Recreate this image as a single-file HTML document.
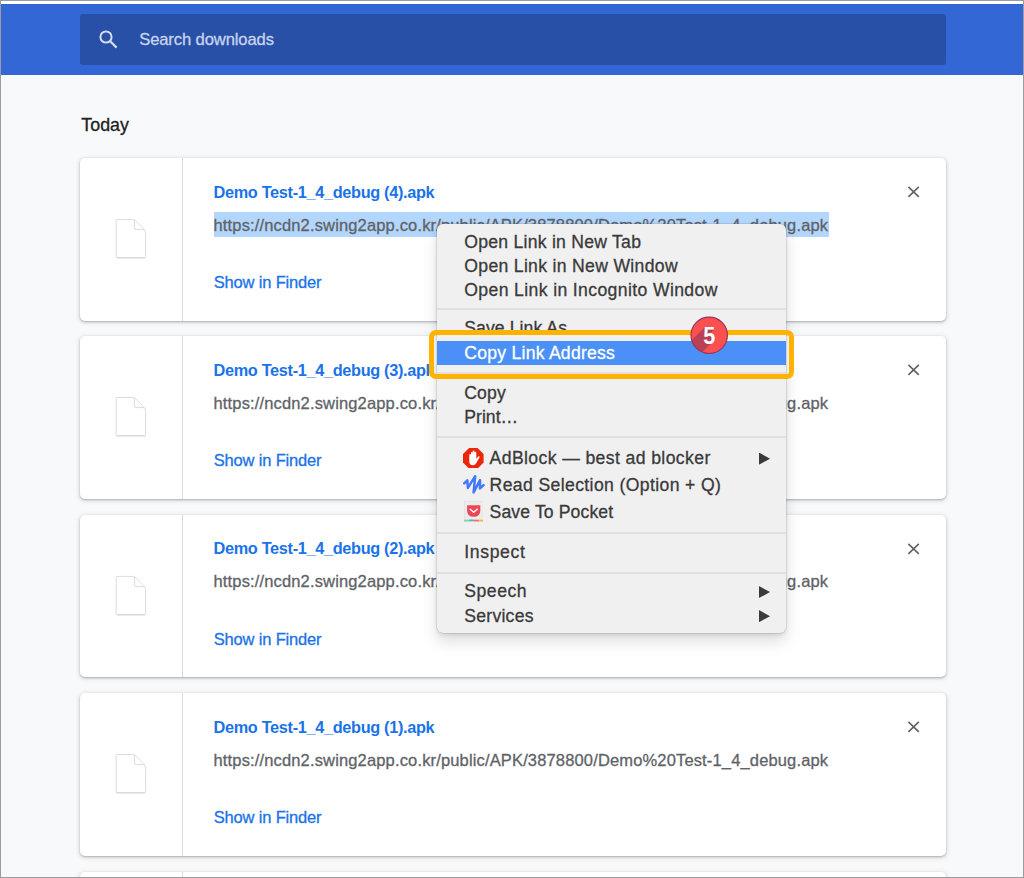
<!DOCTYPE html>
<html lang="en">
<head>
<meta charset="utf-8">
<title>Downloads</title>
<style>
html,body{margin:0;padding:0;}
body{width:1024px;height:878px;position:relative;overflow:hidden;background:#fff;font-family:"Liberation Sans",sans-serif;}
#frame{position:absolute;left:0;top:0;width:1022px;height:876px;border:1px solid rgba(90,90,90,.6);z-index:50;pointer-events:none;}
#page{position:absolute;left:1px;top:4px;width:1022px;height:873px;background:#f8f9fa;overflow:hidden;}
#toolbar{position:absolute;left:0;top:0;width:1022px;height:71px;background:#3367d6;}
#search{position:absolute;left:79px;top:10px;width:866px;height:51px;background:#2850a7;border-radius:3px;}
.t{position:absolute;white-space:nowrap;line-height:20px;-webkit-text-stroke:0.3px currentColor;}
#stext{left:138px;top:26px;color:#c9d3ee;font-size:16.5px;}
#today{left:79px;top:111px;color:#202124;font-size:16.5px;}
.card{position:absolute;left:79px;width:866px;height:162.5px;background:#fff;border-radius:5px;box-shadow:0 1px 2px rgba(60,64,67,.3),0 1px 4px 1px rgba(60,64,67,.15);}
.card .div{position:absolute;left:102px;top:0;width:1px;height:100%;background:#dcdcdc;}
.card .title{left:135px;top:23px;color:#1a73e8;font-weight:bold;font-size:16.5px;-webkit-text-stroke:0;}
.card .url{left:135px;top:56px;color:#5f6368;font-size:16.5px;}
.card .show{left:135px;top:113px;color:#1a73e8;font-size:16.5px;}
.card .x{position:absolute;left:827px;top:27px;width:13px;height:13px;}
.card .file{position:absolute;left:35px;top:60px;width:32px;height:42px;}
.sel{position:absolute;left:134px;top:53.6px;width:615px;height:25.1px;background:#b3d6fd;}

#menu{position:absolute;left:435.7px;top:220.4px;width:349px;height:408.5px;background:#f0f0f0;border-radius:6px;box-shadow:0 0 0 0.5px rgba(0,0,0,.16),0 9px 16px rgba(0,0,0,.13),0 2px 4px rgba(0,0,0,.10);overflow:hidden;}
.m{left:28px;color:#3a3a3a;font-size:17.6px;line-height:22px;}
.mi{left:53.5px;}
.sep{position:absolute;left:0;width:100%;height:1.7px;background:#e1e1e1;}
.hl{position:absolute;left:0;width:100%;height:24px;background:#4a90f6;}
.arr{position:absolute;left:322.2px;width:11.2px;height:12.1px;background:#3a3a3a;clip-path:polygon(0 0,100% 50%,0 100%);}
#obox{position:absolute;left:427.5px;top:326px;width:355.5px;height:39px;border:5px solid #ffb300;border-radius:7px;}
#badge{position:absolute;left:689px;top:312px;}
</style>
<style id="fit">
#stext{font-size:16.6px;letter-spacing:-0.115px;left:138.20px;top:25.75px;}
#today{font-size:17.8px;letter-spacing:0.086px;left:80.20px;top:111.23px;}
.card .title{font-size:16.3px;letter-spacing:-0.321px;left:133.50px;top:23.55px;}
.card .url{font-size:16.5px;letter-spacing:0.151px;left:133.50px;top:56.68px;}
.card .show{font-size:16.5px;letter-spacing:-0.181px;left:133.80px;top:113.88px;}
#m1{font-size:17.6px;letter-spacing:0.256px;left:27.60px;top:6.20px;}
#m2{font-size:17.6px;letter-spacing:0.317px;left:27.60px;top:30.30px;}
#m3{font-size:17.6px;letter-spacing:0.377px;left:27.60px;top:54.30px;}
#m4{font-size:17.6px;letter-spacing:0.085px;left:27.60px;top:93.10px;}
#m5{font-size:17.6px;letter-spacing:0.246px;left:27.60px;top:117.70px;}
#m6{font-size:17.6px;letter-spacing:0.108px;left:27.60px;top:157.90px;}
#m7{font-size:17.6px;letter-spacing:0.025px;left:27.60px;top:182.10px;}
#m8{font-size:17.6px;letter-spacing:0.393px;left:52.90px;top:222.90px;}
#m9{font-size:17.6px;letter-spacing:0.379px;left:52.90px;top:250.00px;}
#m10{font-size:17.6px;letter-spacing:0.126px;left:52.90px;top:276.40px;}
#m11{font-size:17.6px;letter-spacing:0.627px;left:27.60px;top:316.90px;}
#m12{font-size:17.6px;letter-spacing:0.523px;left:27.60px;top:356.00px;}
#m13{font-size:17.6px;letter-spacing:0.248px;left:27.60px;top:380.20px;}
</style>
</head>
<body>
<div id="page">
  <div id="toolbar">
    <div id="search"></div>
    <svg style="position:absolute;left:97px;top:25px" width="22" height="22" viewBox="0 0 22 22"><circle cx="8" cy="8" r="5.6" fill="none" stroke="#d4dcf0" stroke-width="2"/><path d="M12.2 12.2 L18.6 18.6" stroke="#d4dcf0" stroke-width="2.2" fill="none"/></svg>
    <span class="t" id="stext">Search downloads</span>
  </div>
  <span class="t" id="today">Today</span>

  <div class="card" style="top:154px">
    <div class="div"></div>
    <svg class="file" viewBox="0 0 32 42"><path d="M2.1 1.4 H17.5 Q19.5 1.4 21 2.9 L28.8 11 Q30.6 12.9 30.6 15.4 V38.6 Q30.6 39.6 29.6 39.6 H2.1 Q1.1 39.6 1.1 38.6 V2.4 Q1.1 1.4 2.1 1.4 Z" fill="#fff" stroke="#dcdcdc" stroke-width="1"/><path d="M1.6 40 H30.1" stroke="#d2d2d2" stroke-width="0.8" fill="none"/><path d="M19.4 2 V9.8 Q19.4 11.6 21.2 11.6 H29.2" fill="#fdfdfd" stroke="#d6d6d6" stroke-width="0.9"/></svg>
    <span class="t title">Demo Test-1_4_debug (4).apk</span>
    <div class="sel"></div><span class="t url">https://ncdn2.swing2app.co.kr/public/APK/3878800/Demo%20Test-1_4_debug.apk</span>
    <span class="t show">Show in Finder</span>
    <svg class="x" viewBox="0 0 13 13"><path d="M1.4 1.8 L11.8 11.8 M11.8 1.8 L1.4 11.8" stroke="#5f6368" stroke-width="1.6" fill="none"/></svg>
  </div>
  <div class="card" style="top:332.4px">
    <div class="div"></div>
    <svg class="file" viewBox="0 0 32 42"><path d="M2.1 1.4 H17.5 Q19.5 1.4 21 2.9 L28.8 11 Q30.6 12.9 30.6 15.4 V38.6 Q30.6 39.6 29.6 39.6 H2.1 Q1.1 39.6 1.1 38.6 V2.4 Q1.1 1.4 2.1 1.4 Z" fill="#fff" stroke="#dcdcdc" stroke-width="1"/><path d="M1.6 40 H30.1" stroke="#d2d2d2" stroke-width="0.8" fill="none"/><path d="M19.4 2 V9.8 Q19.4 11.6 21.2 11.6 H29.2" fill="#fdfdfd" stroke="#d6d6d6" stroke-width="0.9"/></svg>
    <span class="t title">Demo Test-1_4_debug (3).apk</span>
    <span class="t url">https://ncdn2.swing2app.co.kr/public/APK/3878800/Demo%20Test-1_4_debug.apk</span>
    <span class="t show">Show in Finder</span>
    <svg class="x" viewBox="0 0 13 13"><path d="M1.4 1.8 L11.8 11.8 M11.8 1.8 L1.4 11.8" stroke="#5f6368" stroke-width="1.6" fill="none"/></svg>
  </div>
  <div class="card" style="top:510.8px">
    <div class="div"></div>
    <svg class="file" viewBox="0 0 32 42"><path d="M2.1 1.4 H17.5 Q19.5 1.4 21 2.9 L28.8 11 Q30.6 12.9 30.6 15.4 V38.6 Q30.6 39.6 29.6 39.6 H2.1 Q1.1 39.6 1.1 38.6 V2.4 Q1.1 1.4 2.1 1.4 Z" fill="#fff" stroke="#dcdcdc" stroke-width="1"/><path d="M1.6 40 H30.1" stroke="#d2d2d2" stroke-width="0.8" fill="none"/><path d="M19.4 2 V9.8 Q19.4 11.6 21.2 11.6 H29.2" fill="#fdfdfd" stroke="#d6d6d6" stroke-width="0.9"/></svg>
    <span class="t title">Demo Test-1_4_debug (2).apk</span>
    <span class="t url">https://ncdn2.swing2app.co.kr/public/APK/3878800/Demo%20Test-1_4_debug.apk</span>
    <span class="t show">Show in Finder</span>
    <svg class="x" viewBox="0 0 13 13"><path d="M1.4 1.8 L11.8 11.8 M11.8 1.8 L1.4 11.8" stroke="#5f6368" stroke-width="1.6" fill="none"/></svg>
  </div>
  <div class="card" style="top:689.2px">
    <div class="div"></div>
    <svg class="file" viewBox="0 0 32 42"><path d="M2.1 1.4 H17.5 Q19.5 1.4 21 2.9 L28.8 11 Q30.6 12.9 30.6 15.4 V38.6 Q30.6 39.6 29.6 39.6 H2.1 Q1.1 39.6 1.1 38.6 V2.4 Q1.1 1.4 2.1 1.4 Z" fill="#fff" stroke="#dcdcdc" stroke-width="1"/><path d="M1.6 40 H30.1" stroke="#d2d2d2" stroke-width="0.8" fill="none"/><path d="M19.4 2 V9.8 Q19.4 11.6 21.2 11.6 H29.2" fill="#fdfdfd" stroke="#d6d6d6" stroke-width="0.9"/></svg>
    <span class="t title">Demo Test-1_4_debug (1).apk</span>
    <span class="t url">https://ncdn2.swing2app.co.kr/public/APK/3878800/Demo%20Test-1_4_debug.apk</span>
    <span class="t show">Show in Finder</span>
    <svg class="x" viewBox="0 0 13 13"><path d="M1.4 1.8 L11.8 11.8 M11.8 1.8 L1.4 11.8" stroke="#5f6368" stroke-width="1.6" fill="none"/></svg>
  </div>
  <div class="card" style="top:867.6px">
    <div class="div"></div>
    <svg class="file" viewBox="0 0 32 42"><path d="M2.1 1.4 H17.5 Q19.5 1.4 21 2.9 L28.8 11 Q30.6 12.9 30.6 15.4 V38.6 Q30.6 39.6 29.6 39.6 H2.1 Q1.1 39.6 1.1 38.6 V2.4 Q1.1 1.4 2.1 1.4 Z" fill="#fff" stroke="#dcdcdc" stroke-width="1"/><path d="M1.6 40 H30.1" stroke="#d2d2d2" stroke-width="0.8" fill="none"/><path d="M19.4 2 V9.8 Q19.4 11.6 21.2 11.6 H29.2" fill="#fdfdfd" stroke="#d6d6d6" stroke-width="0.9"/></svg>
    <span class="t title">Demo Test-1_4_debug (0).apk</span>
    <span class="t url">https://ncdn2.swing2app.co.kr/public/APK/3878800/Demo%20Test-1_4_debug.apk</span>
    <span class="t show">Show in Finder</span>
    <svg class="x" viewBox="0 0 13 13"><path d="M1.4 1.8 L11.8 11.8 M11.8 1.8 L1.4 11.8" stroke="#5f6368" stroke-width="1.6" fill="none"/></svg>
  </div>

  <div id="menu">
    <span class="t m" id="m1">Open Link in New Tab</span>
    <span class="t m" id="m2">Open Link in New Window</span>
    <span class="t m" id="m3">Open Link in Incognito Window</span>
    <div class="sep" style="top:84px"></div>
    <span class="t m" id="m4">Save Link As…</span>
    <div class="hl" style="top:117px"></div>
    <span class="t m" id="m5" style="color:#fff">Copy Link Address</span>
    <div class="sep" style="top:148px"></div>
    <span class="t m" id="m6">Copy</span>
    <span class="t m" id="m7">Print…</span>
    <div class="sep" style="top:212px"></div>
    <span class="t m mi" id="m8">AdBlock — best ad blocker</span>
    <span class="t m mi" id="m9">Read Selection (Option + Q)</span>
    <span class="t m mi" id="m10">Save To Pocket</span>
    <div class="sep" style="top:308px"></div>
    <span class="t m" id="m11">Inspect</span>
    <div class="sep" style="top:348px"></div>
    <span class="t m" id="m12">Speech</span>
    <span class="t m" id="m13">Services</span>
    <svg style="position:absolute;left:26.5px;top:223.3px" width="20.6" height="20.6" viewBox="0 0 20.6 20.6"><path d="M6.05 0 H14.55 L20.6 6.05 V14.55 L14.55 20.6 H6.05 L0 14.55 V6.05 Z" fill="#ec260c"/><path d="M6.3 7 Q6.3 6 7.15 6 Q8 6 8 7 V4.9 Q8 4 8.85 4 Q9.7 4 9.7 4.9 V3.5 Q9.7 2.6 10.6 2.6 Q11.5 2.6 11.5 3.5 V4.7 Q11.5 3.8 12.4 3.8 Q13.3 3.8 13.3 4.7 V10.8 L15.2 8.6 Q15.9 7.9 16.4 8.4 Q16.8 8.9 16.3 9.7 L13.6 14.6 Q12.3 17.2 10.2 17.2 H9.8 Q6.3 17.2 6.3 13.2 Z" fill="#fff"/></svg>
    <svg style="position:absolute;left:26px;top:250px" width="22" height="20" viewBox="0 0 22 20"><path d="M1.2 9.4 L4.3 6.4 L4.9 13.9 L12.2 2.2 L10.6 18.5 L17 6.1 L17 14.4 L20.5 11.2" fill="none" stroke="#4478fb" stroke-width="2.5" stroke-linecap="round" stroke-linejoin="round"/></svg>
    <svg style="position:absolute;left:26.9px;top:276.8px" width="19.8" height="20.4" viewBox="0 0 19.8 20.4"><rect x="0.25" y="0.25" width="19.3" height="19.9" fill="#ebebeb" stroke="#dcdcdc" stroke-width="0.5"/><path d="M3.1 4.3 H16.3 V9.2 Q16.3 15.8 9.7 15.8 Q3.1 15.8 3.1 9.2 Z" fill="#ee4656"/><path d="M6.2 8.2 L9.7 11.3 L13.2 8.2" fill="none" stroke="#fff" stroke-width="1.5" stroke-linecap="round" stroke-linejoin="round"/><rect x="0" y="18.7" width="9.8" height="1.7" fill="#7fd1ae"/><rect x="5.1" y="18.7" width="4.7" height="0.9" fill="#5f8fd6"/><rect x="9.9" y="18.7" width="5" height="1.7" fill="#ee6b70"/><rect x="14.9" y="18.7" width="4.9" height="1.7" fill="#f7b52c"/></svg>
    <div class="arr" style="top:228.2px"></div>
    <div class="arr" style="top:361.6px"></div>
    <div class="arr" style="top:385.7px"></div>
  </div>
  <div id="obox"></div>
  <svg id="badge" width="40" height="40" viewBox="0 0 40 40"><defs><clipPath id="bc"><circle cx="19.2" cy="19.35" r="18.3"/></clipPath></defs><circle cx="19.2" cy="19.35" r="18.3" fill="#fb5050"/><polygon clip-path="url(#bc)" points="14.7,11.3 23.8,11.3 23.8,13.9 20.1,17.6 22.5,18.1 24.5,21.6 24,24.44 -10,58.44 -10,36" fill="#b94055"/><circle cx="19.2" cy="19.35" r="18.2" fill="none" stroke="#98345a" stroke-width="1.1"/><text transform="translate(13.3,27.8) scale(0.91,1)" font-family="Liberation Sans, sans-serif" font-weight="bold" font-size="23.8" fill="#fff">5</text></svg>
</div>
<div id="frame"></div>
</body>
</html>
